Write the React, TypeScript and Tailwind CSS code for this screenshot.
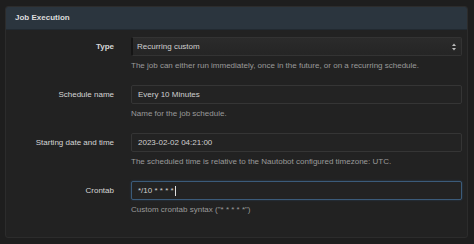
import React from "react";

function Row({ label, bold, children, help }: { label: string; bold?: boolean; children: React.ReactNode; help: string }) {
  return (
    <div className="flex">
      <div className="w-[108px] shrink-0 h-[19px] flex items-center justify-end">
        <span className={`text-[8px] leading-none text-[#d6d6d6] ${bold ? "font-bold" : ""}`}>{label}</span>
      </div>
      <div className="ml-[17px] w-[331px] flex flex-col">
        {children}
        <div className="mt-[4px] h-[11px] text-[8px] leading-[11px] text-[#9a9a9a] whitespace-nowrap">{help}</div>
      </div>
    </div>
  );
}

function Input({ value, focus, caret }: { value: string; focus?: boolean; caret?: boolean }) {
  return (
    <div
      className={`h-[19px] rounded-[2px] border flex items-center pl-[6px] text-[8px] text-[#d0d0d0] bg-[#232323] ${
        focus ? "border-[#3b5b7a] shadow-[0_0_2px_#2c4660]" : "border-[#353535]"
      }`}
    >
      <span className="whitespace-pre">{value}</span>
      {caret && <span className="ml-[1px] w-[1px] h-[10px] bg-[#e0e0e0]" />}
    </div>
  );
}

export default function App() {
  return (
    <div className="w-[474px] h-[244px] bg-[#1e1e1e] pl-[5px] pt-[6px] overflow-hidden" style={{ fontFamily: '"Liberation Sans", Arial, sans-serif' }}>
      <div className="w-[463px] h-[232px] bg-[#222222] border border-[#2c2c2c] rounded-[3px] overflow-hidden">
        <div className="h-[23px] bg-[#2b353e] flex items-center pl-[9px] border-b border-[#222a31]">
          <span className="text-[8px] font-bold text-[#dcdcdc]">Job Execution</span>
        </div>
        <div className="pt-[7px] flex flex-col gap-[14px]">
          <Row label="Type" bold help="The job can either run immediately, once in the future, or on a recurring schedule.">
            <div className="h-[19px] rounded-[2px] border border-[#333333] border-l-[#151515] border-l-2 bg-gradient-to-b from-[#2b2b2b] to-[#252525] flex items-center pl-[4px] pr-[5px] text-[8px] text-[#d0d0d0]">
              <span className="flex-1">Recurring custom</span>
              <svg width="4" height="8" viewBox="0 0 4 8">
                <path d="M0 3 L2 0.5 L4 3 Z" fill="#bdbdbd" />
                <path d="M0 5 L2 7.5 L4 5 Z" fill="#bdbdbd" />
              </svg>
            </div>
          </Row>
          <Row label="Schedule name" help="Name for the job schedule.">
            <Input value="Every 10 Minutes" />
          </Row>
          <Row label="Starting date and time" help="The scheduled time is relative to the Nautobot configured timezone: UTC.">
            <Input value="2023-02-02 04:21:00" />
          </Row>
          <Row label="Crontab" help={'Custom crontab syntax ("* * * * *")'}>
            <Input value="*/10 * * * *" focus caret />
          </Row>
        </div>
      </div>
    </div>
  );
}
